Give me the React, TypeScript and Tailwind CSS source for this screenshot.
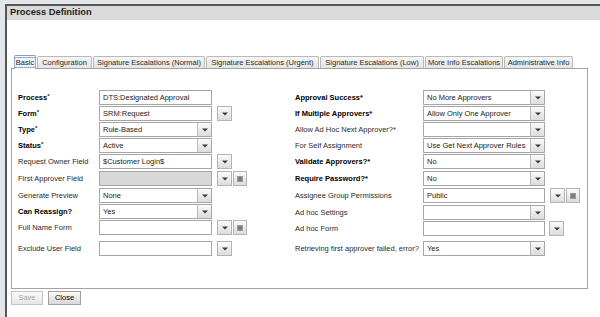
import React from 'react';

type Kind = 'text' | 'combo' | 'disabled';

interface Row {
  label: string;
  bold?: boolean;
  kind: Kind;
  value?: string;
  drop?: boolean;
  square?: boolean;
  h: string;
  gap?: string;
}

const leftRows: Row[] = [
  { label: 'Process', bold: true, kind: 'text', value: 'DTS:Designated Approval', h: 'h-[16px]' },
  { label: 'Form', bold: true, kind: 'text', value: 'SRM:Request', drop: true, h: 'h-[16px]' },
  { label: 'Type', bold: true, kind: 'combo', value: 'Rule-Based', h: 'h-[16px]' },
  { label: 'Status', bold: true, kind: 'combo', value: 'Active', h: 'h-[16px]' },
  { label: 'Request Owner Field', kind: 'text', value: '$Customer Login$', drop: true, h: 'h-[17px]' },
  { label: 'First Approver Field', kind: 'disabled', drop: true, square: true, h: 'h-[17px]' },
  { label: 'Generate Preview', kind: 'combo', value: 'None', h: 'h-[16px]' },
  { label: 'Can Reassign?', bold: true, kind: 'combo', value: 'Yes', h: 'h-[16px]' },
  { label: 'Full Name Form', kind: 'text', drop: true, square: true, h: 'h-[21px]' },
  { label: 'Exclude User Field', kind: 'text', drop: true, h: 'h-[16px]' },
];

const rightRows: Row[] = [
  { label: 'Approval Success*', bold: true, kind: 'combo', value: 'No More Approvers', h: 'h-[16px]' },
  { label: 'If Multiple Approvers*', bold: true, kind: 'combo', value: 'Allow Only One Approver', h: 'h-[16px]' },
  { label: 'Allow Ad Hoc Next Approver?*', kind: 'combo', h: 'h-[16px]' },
  { label: 'For Self Assignment', kind: 'combo', value: 'Use Get Next Approver Rules', h: 'h-[16px]' },
  { label: 'Validate Approvers?*', bold: true, kind: 'combo', value: 'No', h: 'h-[17px]' },
  { label: 'Require Password?*', bold: true, kind: 'combo', value: 'No', h: 'h-[17px]' },
  { label: 'Assignee Group Permissions', kind: 'text', value: 'Public', drop: true, square: true, h: 'h-[17px]', gap: 'ml-[5px]' },
  { label: 'Ad hoc Settings', kind: 'combo', h: 'h-[16px]' },
  { label: 'Ad hoc Form', kind: 'text', drop: true, h: 'h-[20px]', gap: 'ml-[4px]' },
  { label: 'Retrieving first approver failed, error?', kind: 'combo', value: 'Yes', h: 'h-[16px]' },
];

const tabs = [
  { name: 'Basic', w: 'w-[22px]' },
  { name: 'Configuration', w: 'w-[55px]' },
  { name: 'Signature Escalations (Normal)', w: 'w-[112px]' },
  { name: 'Signature Escalations (Urgent)', w: 'w-[113px]' },
  { name: 'Signature Escalations (Low)', w: 'w-[104px]' },
  { name: 'More Info Escalations', w: 'w-[78px]' },
  { name: 'Administrative Info', w: 'w-[69px]' },
];

function Arrow() {
  return (
    <svg width="6" height="4" viewBox="0 0 6 4">
      <path d="M0 0.5 L6 0.5 L3 3.5 Z" fill="#3a3a3a" />
    </svg>
  );
}

function DropBtn({ className = '' }: { className?: string }) {
  return (
    <div
      className={`w-[15px] h-[15px] shrink-0 border border-[#b3b3b3] bg-gradient-to-b from-[#fbfbfb] to-[#dcdcdc] flex items-center justify-center ${className}`}
    >
      <Arrow />
    </div>
  );
}

function SquareBtn() {
  return (
    <div className="ml-[1px] w-[14px] h-[15px] shrink-0 border border-[#b3b3b3] bg-gradient-to-b from-[#fbfbfb] to-[#dcdcdc] flex items-center justify-center">
      <div className="w-[6px] h-[6px] bg-[#7c7c7c] border border-[#9a9a9a]" />
    </div>
  );
}

function Field({ row, width }: { row: Row; width: string }) {
  if (row.kind === 'combo') {
    return (
      <div className={`${width} h-[15px] border border-[#a6a6a6] bg-white flex`}>
        <div className="flex-1 px-[3px] leading-[13px] whitespace-nowrap overflow-hidden">{row.value}</div>
        <div className="w-[14px] h-full border-l border-[#b8b8b8] bg-gradient-to-b from-[#fbfbfb] to-[#dcdcdc] flex items-center justify-center">
          <Arrow />
        </div>
      </div>
    );
  }
  return (
    <div className="flex">
      <div
        className={`${width} h-[15px] border border-[#a6a6a6] px-[3px] leading-[13px] whitespace-nowrap overflow-hidden ${
          row.kind === 'disabled' ? 'bg-[#d8d8d8]' : 'bg-white'
        }`}
      >
        {row.value}
      </div>
      {row.drop && <DropBtn className={row.gap ?? 'ml-[5px]'} />}
      {row.square && <SquareBtn />}
    </div>
  );
}

function Label({ row }: { row: Row }) {
  return (
    <span className={row.bold ? 'font-bold text-black' : 'text-[#2a2a2a]'}>{row.label}</span>
  );
}

export default function App() {
  return (
    <div className="w-[600px] h-[317px] overflow-hidden bg-[#e2e6eb] pl-[5px] pt-[4px] font-['Liberation_Sans',Arial,sans-serif] text-[7.5px] text-[#222]">
      <div className="w-[620px] h-[330px] border-l-2 border-t-2 border-[#565656] bg-white">
        <div className="h-[14px] bg-[#dadada] pl-[3px] flex items-center text-[9.3px] font-bold text-[#1e1e1e]">
          Process Definition
        </div>
        <div className="pl-[4px] pt-[35px]">
          <div className="flex items-end gap-[1px] pl-[3px]">
            {tabs.map((t, i) =>
              i === 0 ? (
                <div
                  key={t.name}
                  className={`${t.w} h-[14px] -mb-[1px] border border-b-0 border-[#9c9c9c] bg-white rounded-t-[2px] flex items-center justify-center`}
                >
                  <span className="px-[1px] leading-[9px] border border-[#8aaedb] rounded-[2px] bg-[#eef4fb]">
                    {t.name}
                  </span>
                </div>
              ) : (
                <div
                  key={t.name}
                  className={`${t.w} h-[12px] border border-b-0 border-[#b9b9b9] bg-gradient-to-b from-[#f6f6f6] to-[#e4e4e4] rounded-t-[2px] flex items-center justify-center whitespace-nowrap text-[#2a2a2a]`}
                >
                  {t.name}
                </div>
              ),
            )}
          </div>
          <div className="w-[577px] h-[221px] border border-[#a3a3a3] flex pl-[6px] pt-[21px]">
            <div className="w-[277px] flex flex-col">
              {leftRows.map((r) => (
                <div key={r.label} className={`${r.h} flex items-start`}>
                  <div className="w-[81px] h-[15px] flex items-center whitespace-nowrap">
                    <Label row={r} />
                    {r.bold && r.label !== 'Can Reassign?' && (
                      <span className="text-[6px] font-bold self-start mt-[2px]">*</span>
                    )}
                  </div>
                  <Field row={r} width="w-[113px]" />
                </div>
              ))}
            </div>
            <div className="flex flex-col">
              {rightRows.map((r) => (
                <div key={r.label} className={`${r.h} flex items-start`}>
                  <div className="w-[128px] h-[15px] flex items-center whitespace-nowrap">
                    <Label row={r} />
                  </div>
                  <Field row={r} width="w-[122px]" />
                </div>
              ))}
            </div>
          </div>
          <div className="flex gap-[5px] mt-[2px]">
            <div className="w-[32px] h-[14px] border border-[#c4c4c4] bg-gradient-to-b from-[#fafafa] to-[#e6e6e6] flex items-center justify-center text-[#a8a8a8]">
              Save
            </div>
            <div className="w-[33px] h-[14px] border border-[#9f9f9f] bg-gradient-to-b from-[#fafafa] to-[#d8d8d8] flex items-center justify-center text-black">
              Close
            </div>
          </div>
        </div>
      </div>
    </div>
  );
}
